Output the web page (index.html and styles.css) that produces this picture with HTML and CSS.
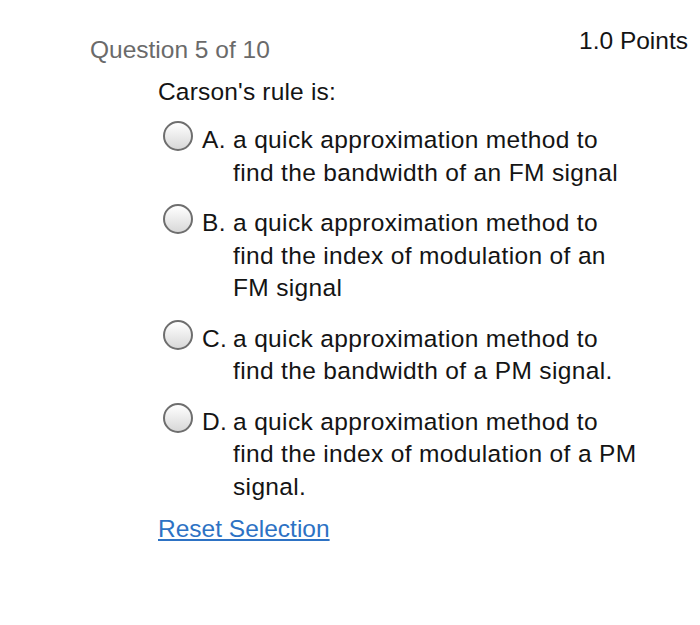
FILE: index.html
```html
<!DOCTYPE html>
<html>
<head>
<meta charset="utf-8">
<link rel="stylesheet" href="styles.css">
</head>
<body>
<div class="page">
  <div class="header">
    <div class="qnum">Question 5 of 10</div>
    <div class="points">1.0 Points</div>
  </div>
  <div class="prompt">Carson's rule is:</div>
  <div class="options">
    <div class="option">
      <span class="radio"></span>
      <span class="letter">A.</span>
      <span class="text">a quick approximation method to<br>find the bandwidth of an FM signal</span>
    </div>
    <div class="option">
      <span class="radio"></span>
      <span class="letter">B.</span>
      <span class="text">a quick approximation method to<br>find the index of modulation of an<br>FM signal</span>
    </div>
    <div class="option">
      <span class="radio"></span>
      <span class="letter">C.</span>
      <span class="text">a quick approximation method to<br>find the bandwidth of a PM signal.</span>
    </div>
    <div class="option">
      <span class="radio"></span>
      <span class="letter">D.</span>
      <span class="text">a quick approximation method to<br>find the index of modulation of a PM<br>signal.</span>
    </div>
  </div>
  <a class="reset" href="#">Reset Selection</a>
</div>
</body>
</html>
```
FILE: styles.css
```css
html, body {
  margin: 0;
  padding: 0;
  background: #ffffff;
}
body {
  width: 700px;
  height: 625px;
  font-family: "Liberation Sans", Arial, Helvetica, sans-serif;
  font-size: 24.5px;
  color: #141414;
}
.page {
  display: flex;
  flex-direction: column;
  padding: 25px 12px 0 90px;
}
.header {
  display: flex;
  justify-content: space-between;
  align-items: flex-start;
}
.qnum {
  color: #6a6a6a;
  margin-top: 9px;
  line-height: 32px;
}
.points {
  line-height: 32px;
}
.prompt {
  margin-left: 68px;
  margin-top: 10px;
  line-height: 32px;
  letter-spacing: 0.18px;
}
.options {
  display: flex;
  flex-direction: column;
  gap: 18px;
  margin-top: 16px;
  margin-left: 73px;
}
.option {
  display: flex;
  align-items: flex-start;
  line-height: 32.5px;
  letter-spacing: 0.35px;
}
.radio {
  flex: none;
  width: 26px;
  height: 26px;
  border: 2px solid #6e6e6e;
  border-radius: 50%;
  background: linear-gradient(#ffffff, #d8d8d8);
  margin-top: -3px;
  margin-right: 9px;
  box-sizing: content-box;
}
.letter {
  flex: none;
  width: 31px;
}
.text {
  display: block;
}
.reset {
  margin-top: 10px;
  margin-left: 68px;
  align-self: flex-start;
  color: #2d72c4;
  line-height: 32px;
  text-decoration: underline;
}
```
